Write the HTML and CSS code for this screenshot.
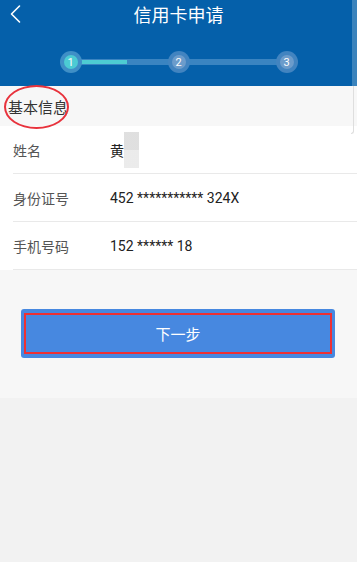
FILE: index.html
```html
<!DOCTYPE html>
<html lang="zh">
<head>
<meta charset="utf-8">
<title>信用卡申请</title>
<link rel="stylesheet" href="styles.css">
</head>
<body>
<div class="page">
  <header class="header">
    <div class="topbar">
      <svg class="back" width="12" height="20" viewBox="0 0 12 20"><path d="M9.5 2 L1.5 10 L9.5 18" fill="none" stroke="#fff" stroke-width="1.6" stroke-linecap="round" stroke-linejoin="round"/></svg>
      <h1 class="title">信用卡申请</h1>
    </div>
    <div class="steps">
      <div class="track"><div class="track-fill"></div></div>
      <span class="step active">1</span>
      <span class="step">2</span>
      <span class="step">3</span>
    </div>
    <div class="scroll-strip"></div>
  </header>
  <section class="section">
    <div class="section-title"><span class="mark">基本信息</span></div>
    <div class="card">
      <div class="row"><span class="label">姓名</span><span class="value">黄<span class="blur"></span></span></div>
      <div class="row"><span class="label">身份证号</span><span class="value">452 *********** 324X</span></div>
      <div class="row"><span class="label">手机号码</span><span class="value">152 ****** 18</span></div>
    </div>
    <div class="actions">
      <button class="next"><span class="next-inner">下一步</span></button>
    </div>
    <div class="edge"></div>
  </section>
</div>
</body>
</html>
```
FILE: styles.css
```css
* { box-sizing: border-box; }
html, body { margin: 0; padding: 0; }
body {
  width: 357px;
  height: 562px;
  background: #f2f2f2;
  font-family: "Noto Sans CJK SC", "Noto Sans", sans-serif;
  overflow: hidden;
}
.page { position: relative; }
.header {
  position: relative;
  background: #0560aa;
  height: 86px;
}
.topbar {
  position: relative;
  height: 30px;
  display: flex;
  align-items: center;
  justify-content: center;
}
.back { position: absolute; left: 10px; top: 4px; }
.title {
  margin: 0;
  color: #fff;
  font-size: 18px;
  font-weight: 400;
  line-height: 30px;
  margin-top: -2px;
}
.steps {
  position: relative;
  margin: 21px auto 0;
  width: 238px;
  height: 22px;
  display: flex;
  justify-content: space-between;
  align-items: center;
}
.track {
  position: absolute;
  left: 11px; right: 11px;
  top: 8px;
  height: 6px;
  background: #3a84c1;
}
.track-fill {
  width: 56px;
  height: 4px;
  margin-top: 1px;
  background: #4ecbd2;
}
.step {
  position: relative;
  width: 22px; height: 22px;
  border-radius: 50%;
  background: #4284c0;
  display: flex;
  align-items: center;
  justify-content: center;
  color: #fff;
  font-family: "Roboto", "Noto Sans", sans-serif;
  font-size: 11px;
}
.step::before {
  content: "";
  position: absolute;
  left: 4px; top: 4px;
  width: 14px; height: 14px;
  border-radius: 50%;
  background: #6c9ccb;
}
.step.active { background: #3f8fc6; }
.step.active::before { background: #4ccbd3; }
.step { z-index: 1; }
.step { line-height: 1; }
.step > * { position: relative; }
.step { isolation: isolate; }
.step::before { z-index: -1; }
.scroll-strip {
  position: absolute;
  right: 0; top: 0;
  width: 5px; height: 86px;
  background: rgba(255,255,255,0.22);
}
.section {
  position: relative;
  background: #f7f7f7;
  height: 312px;
}
.section-title {
  height: 40px;
  padding-left: 8px;
  display: flex;
  align-items: center;
  font-size: 15px;
  color: #333;
}
.mark { position: relative; }
.mark::after {
  content: "";
  position: absolute;
  left: -4px; top: -11px;
  width: 61px; height: 40px;
  border: 2px solid #e8323c;
  border-radius: 50%;
}
.card { background: #fff; }
.row {
  height: 48px;
  margin-left: 13px;
  border-bottom: 1px solid #e9e9e9;
  display: flex;
  align-items: center;
  font-size: 14px;
}
.label { width: 97px; color: #555; }
.value {
  color: #222;
  font-family: "Roboto", "Noto Sans CJK SC", sans-serif;
  display: flex;
  align-items: center;
}
.blur {
  display: inline-block;
  width: 15px; height: 36px;
  margin-left: 0;
  background: linear-gradient(#dcdcdc 0 50%, #e9e9e9 50% 100%);
  opacity: 0.9;
}
.actions { padding: 39px 21px 0 21px; }
.next {
  display: block;
  width: 314px;
  height: 49px;
  padding: 4px 3px;
  border: 0;
  border-radius: 3px;
  background: #4788e0;
  font-family: inherit;
  cursor: pointer;
}
.next-inner {
  display: flex;
  align-items: center;
  justify-content: center;
  height: 100%;
  border: 2px solid #ee3033;
  color: #fff;
  font-size: 15px;
}
.edge {
  position: absolute;
  right: 3px; top: 0;
  width: 3px; height: 48px;
  border-right: 1px solid #dedede;
  border-bottom: 1px solid #dedede;
  border-bottom-right-radius: 3px;
}
```
